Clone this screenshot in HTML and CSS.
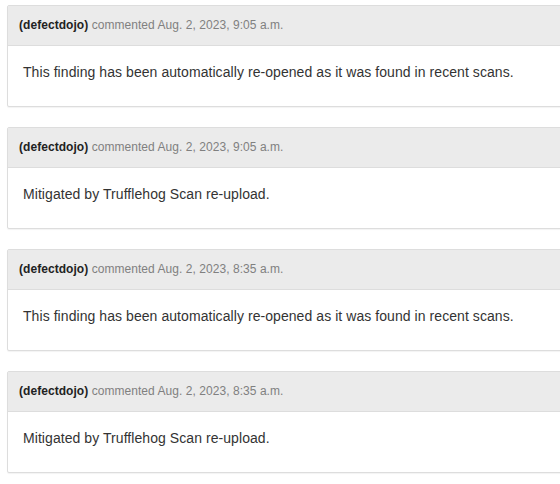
FILE: index.html
```html
<!DOCTYPE html>
<html>
<head>
<meta charset="utf-8">
<link rel="stylesheet" href="styles.css">
</head>
<body>
<div class="notes">
  <div class="panel">
    <div class="panel-heading"><strong class="author">(defectdojo)</strong> <span class="meta">commented Aug. 2, 2023, 9:05 a.m.</span></div>
    <div class="panel-body"><p>This finding has been automatically re-opened as it was found in recent scans.</p></div>
  </div>
  <div class="panel">
    <div class="panel-heading"><strong class="author">(defectdojo)</strong> <span class="meta">commented Aug. 2, 2023, 9:05 a.m.</span></div>
    <div class="panel-body"><p>Mitigated by Trufflehog Scan re-upload.</p></div>
  </div>
  <div class="panel">
    <div class="panel-heading"><strong class="author">(defectdojo)</strong> <span class="meta">commented Aug. 2, 2023, 8:35 a.m.</span></div>
    <div class="panel-body"><p>This finding has been automatically re-opened as it was found in recent scans.</p></div>
  </div>
  <div class="panel">
    <div class="panel-heading"><strong class="author">(defectdojo)</strong> <span class="meta">commented Aug. 2, 2023, 8:35 a.m.</span></div>
    <div class="panel-body"><p>Mitigated by Trufflehog Scan re-upload.</p></div>
  </div>
</div>
</body>
</html>
```
FILE: styles.css
```css
html, body {
  margin: 0;
  padding: 0;
  background: #fff;
  overflow: hidden;
}
body {
  font-family: "Liberation Sans", Arial, sans-serif;
  color: #333;
}
.notes {
  padding: 5px 0 0 7px;
  width: 600px;
}
.panel {
  border: 1px solid #ddd;
  border-radius: 2px;
  background: #fff;
  margin-bottom: 20px;
  box-shadow: 0 1px 1px rgba(0, 0, 0, 0.05);
}
.panel-heading {
  background: #ebebeb;
  border-bottom: 1px solid #ddd;
  padding: 9px 11px 10px;
  font-size: 12px;
  line-height: 20px;
  letter-spacing: 0.05px;
}
.author {
  color: #222;
  font-weight: bold;
}
.meta {
  color: #808080;
}
.panel-body {
  padding: 16px 15px 14px;
}
.panel-body p {
  margin: 0 0 10px;
  font-size: 14px;
  line-height: 20px;
  color: #333;
  letter-spacing: 0.065px;
}
```
